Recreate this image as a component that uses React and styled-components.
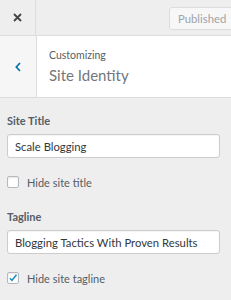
import React from 'react';
import styled, { createGlobalStyle } from 'styled-components';

const GlobalStyle = createGlobalStyle`
  html, body {
    margin: 0;
    padding: 0;
    background: #eee;
  }
  body {
    font-family: Lato, "Noto Sans", sans-serif;
    color: #555d66;
  }
  * {
    box-sizing: border-box;
  }
`;

const Sidebar = styled.div`
  width: 231px;
  height: 300px;
  overflow: hidden;
  background: #eee;
`;

const TopBar = styled.div`
  display: flex;
  align-items: flex-start;
  height: 36px;
  border-bottom: 1px solid #ddd;
  overflow: hidden;
`;

const CloseButton = styled.button`
  width: 36px;
  height: 35px;
  display: flex;
  align-items: center;
  justify-content: center;
  padding: 0;
  border: 0;
  border-right: 1px solid #ddd;
  background: transparent;
  color: #444;
`;

const PublishedButton = styled.button`
  width: 72px;
  flex: none;
  margin: 7px -10px 0 auto;
  height: 23px;
  padding: 0 0 0 8px;
  text-align: left;
  border: 1px solid #ddd;
  border-radius: 3px;
  background: #f7f7f7;
  color: #a0a5aa;
  font-family: inherit;
  font-size: 11.3px;
  line-height: 21px;
`;

const SectionHeader = styled.div`
  display: flex;
  height: 62px;
  border-bottom: 1px solid #ddd;
`;

const BackButton = styled.button`
  width: 37px;
  flex: none;
  display: flex;
  align-items: center;
  justify-content: center;
  padding: 0;
  border: 0;
  border-right: 1px solid #ddd;
  background: #f6f6f6;
  color: #0073aa;
`;

const TitleBlock = styled.div`
  flex: 1;
  background: #fff;
  padding: 12px 0 0 12px;
`;

const Crumb = styled.div`
  font-size: 10.5px;
  line-height: 14px;
  color: #555d66;
`;

const SectionTitle = styled.h3`
  margin: 3px 0 0;
  font-size: 15px;
  line-height: 20px;
  font-weight: 400;
  color: #72777c;
`;

const Controls = styled.div`
  padding: 15px 11px 0 7px;
`;

const Control = styled.div`
  margin-bottom: ${({ $gap }) => $gap}px;
`;

const Label = styled.label`
  display: block;
  font-size: 11px;
  line-height: 15px;
  font-weight: 700;
  color: #555d66;
  margin-bottom: 6px;
`;

const TextInput = styled.input`
  display: block;
  width: 100%;
  height: 24px;
  padding: 0 7px;
  border: 1px solid #ccc;
  border-radius: 3px;
  background: #fff;
  font-family: inherit;
  font-size: 11.3px;
  color: #32373c;
  box-shadow: inset 0 1px 1px rgba(0, 0, 0, 0.04);
  outline: none;
`;

const CheckRow = styled.label`
  display: flex;
  align-items: center;
  gap: 8px;
  height: 12px;
  margin-top: 18px;
  font-size: 11px;
  color: #555d66;
`;

const Box = styled.span`
  width: 12px;
  height: 12px;
  flex: none;
  display: flex;
  align-items: center;
  justify-content: center;
  border: 1px solid #b4b9be;
  border-radius: 2px;
  background: #fff;
  box-shadow: inset 0 1px 2px rgba(0, 0, 0, 0.1);
`;

const Checkbox = ({ checked }) => (
  <Box>
    {checked && (
      <svg width="12" height="12" viewBox="0 0 12 12">
        <path d="M2.2 6.2 L4.8 8.8 L10.2 2.2" fill="none" stroke="#1e8cbe" strokeWidth="1.8" />
      </svg>
    )}
  </Box>
);

const App = () => (
  <Sidebar>
    <GlobalStyle />
    <TopBar>
      <CloseButton aria-label="Close">
        <svg width="9" height="9" viewBox="0 0 9 9">
          <path d="M1 1 L8 8 M8 1 L1 8" stroke="#444" strokeWidth="1.8" />
        </svg>
      </CloseButton>
      <PublishedButton disabled>Published</PublishedButton>
    </TopBar>
    <SectionHeader>
      <BackButton aria-label="Back">
        <svg width="6" height="10" viewBox="0 0 6 10">
          <path d="M5 1 L1.3 5 L5 9" fill="none" stroke="#0073aa" strokeWidth="1.7" />
        </svg>
      </BackButton>
      <TitleBlock>
        <Crumb>Customizing</Crumb>
        <SectionTitle>Site Identity</SectionTitle>
      </TitleBlock>
    </SectionHeader>
    <Controls>
      <Control $gap={21}>
        <Label>Site Title</Label>
        <TextInput defaultValue="Scale Blogging" />
        <CheckRow>
          <Checkbox />
          Hide site title
        </CheckRow>
      </Control>
      <Control $gap={0}>
        <Label>Tagline</Label>
        <TextInput defaultValue="Blogging Tactics With Proven Results" />
        <CheckRow>
          <Checkbox checked />
          Hide site tagline
        </CheckRow>
      </Control>
    </Controls>
  </Sidebar>
);

export default App;
